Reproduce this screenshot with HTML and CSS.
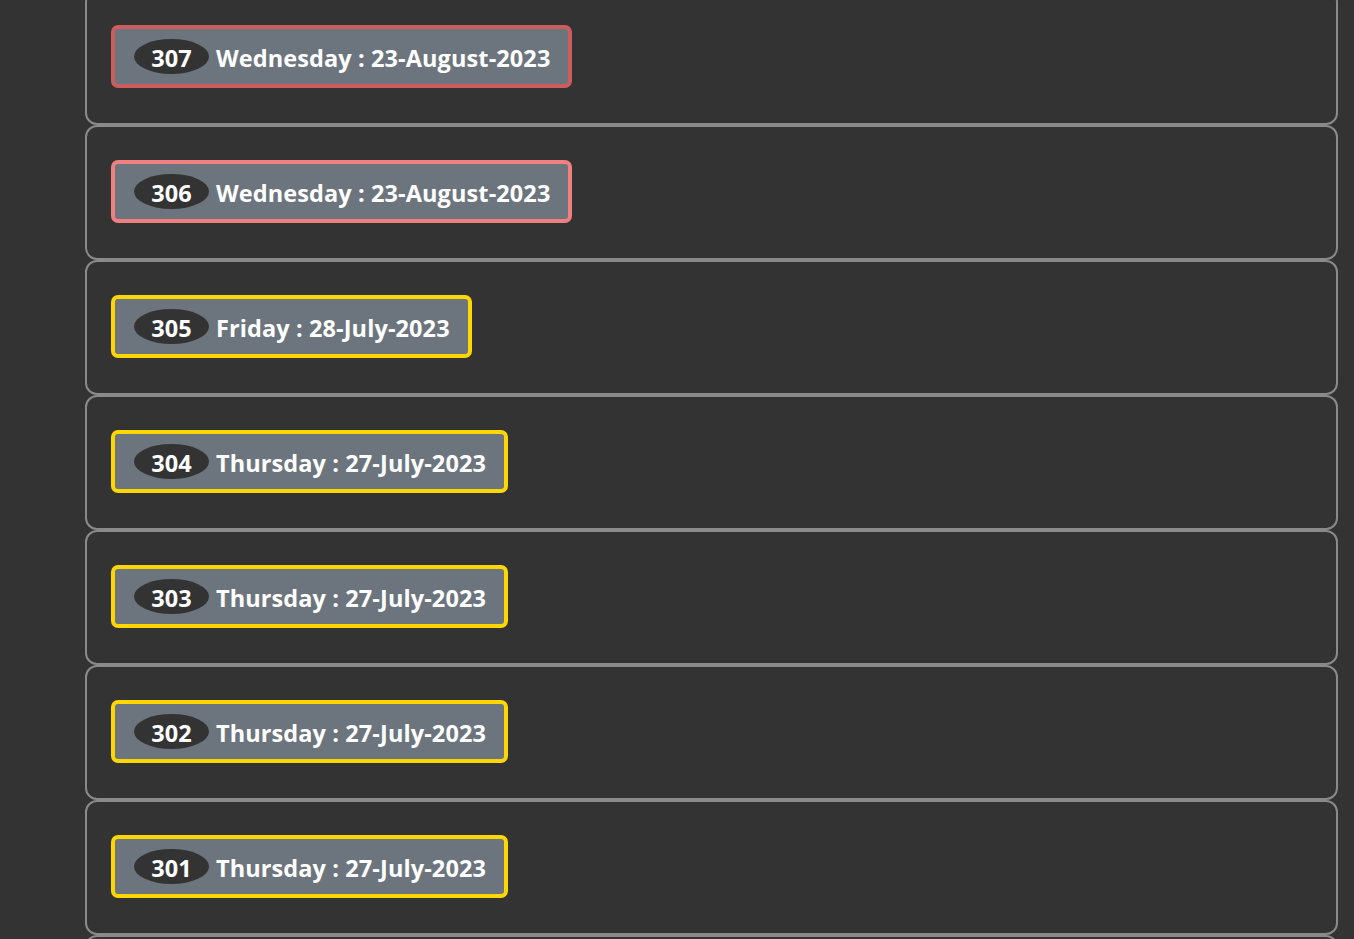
FILE: index.html
```html
<!DOCTYPE html>
<html>
<head>
<meta charset="utf-8">
<link rel="stylesheet" href="styles.css">
</head>
<body>
<div class="list">
  <div class="card"><div class="badge badge-red"><span class="num">307</span><span class="date">Wednesday : 23-August-2023</span></div></div>
  <div class="card"><div class="badge badge-coral"><span class="num">306</span><span class="date">Wednesday : 23-August-2023</span></div></div>
  <div class="card"><div class="badge badge-gold"><span class="num">305</span><span class="date">Friday : 28-July-2023</span></div></div>
  <div class="card"><div class="badge badge-gold"><span class="num">304</span><span class="date">Thursday : 27-July-2023</span></div></div>
  <div class="card"><div class="badge badge-gold"><span class="num">303</span><span class="date">Thursday : 27-July-2023</span></div></div>
  <div class="card"><div class="badge badge-gold"><span class="num">302</span><span class="date">Thursday : 27-July-2023</span></div></div>
  <div class="card"><div class="badge badge-gold"><span class="num">301</span><span class="date">Thursday : 27-July-2023</span></div></div>
  <div class="card card-stub"></div>
</div>
</body>
</html>
```
FILE: styles.css
```css
html, body {
  margin: 0;
  padding: 0;
  background: #333333;
  overflow: hidden;
  height: 939px;
}
body {
  font-family: "Open Sans", "Noto Sans", sans-serif;
  color: #ffffff;
}
.list {
  margin: -10px 16px 0 85px;
  display: flex;
  flex-direction: column;
}
.card {
  border: 2px solid #8a8a8a;
  border-radius: 12px;
  padding: 33px 24px 35px;
  display: flex;
  align-items: flex-start;
}
.card-stub {
  height: 63px;
}
.badge {
  display: flex;
  align-items: center;
  gap: 7px;
  height: 55px;
  padding: 0 18px 0 19px;
  border: 4px solid #ffd700;
  border-radius: 7px;
  background: #6c757d;
  font-weight: 700;
  font-size: 23.5px;
  letter-spacing: 0.1px;
}
.badge-red { border-color: #cd5c5c; }
.badge-coral { border-color: #f08080; }
.badge-gold { border-color: #ffd700; }
.num {
  display: flex;
  align-items: center;
  justify-content: center;
  box-sizing: border-box;
  width: 75px;
  height: 35px;
  padding-top: 3px;
  border-radius: 50%;
  background: #333333;
}
.date {
  white-space: nowrap;
  padding-top: 3px;
}
```
